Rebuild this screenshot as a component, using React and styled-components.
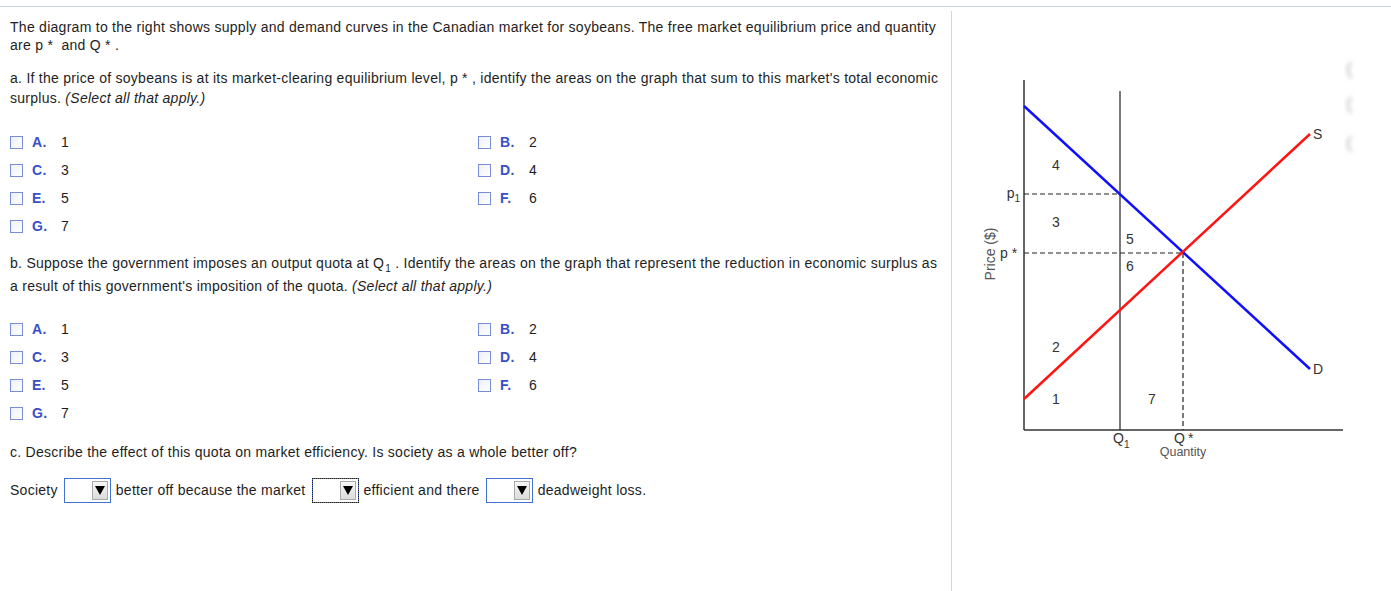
import React from 'react';
import styled, { createGlobalStyle } from 'styled-components';

const GlobalStyle = createGlobalStyle`
    html, body {
        margin: 0;
        padding: 0;
        background: #fff;
    }
    body {
        font-family: 'Liberation Sans', Arial, sans-serif;
        font-size: 14px;
        letter-spacing: 0.27px;
        color: #1e1e1e;
    }
`;

const Page = styled.div`
    margin-top: 6px;
    border-top: 1px solid #cbd2e2;
    height: 584px;
    display: flex;
    align-items: stretch;
`;

const Left = styled.div`
    box-sizing: border-box;
    width: 952px;
    margin-top: 4px;
    padding: 7px 0 0 10px;
    border-right: 1px solid #d6d6d6;
`;

const Right = styled.div`
    flex: 1;
    margin-top: 4px;
    overflow: hidden;
`;

const Para = styled.p`
    margin: ${(p) => p.$mt || 0}px 0 0;
    line-height: ${(p) => p.$lh || 18}px;
    white-space: nowrap;

    em {
        font-style: italic;
    }
`;

const Sub = styled.sub`
    font-size: 10px;
    vertical-align: -4px;
    line-height: 0;
    margin-left: 1px;
`;

const OptionGrid = styled.div`
    margin-top: ${(p) => p.$mt}px;
    display: grid;
    grid-template-columns: 468px 1fr;
    grid-auto-rows: 28px;
    align-items: center;
`;

const Option = styled.label`
    display: flex;
    align-items: center;
`;

const Box = styled.span`
    box-sizing: border-box;
    width: 13px;
    height: 13px;
    border: 1px solid #7a8cd8;
    background: linear-gradient(135deg, #eef0f8, #fff);
    margin-right: 9px;
`;

const Letter = styled.span`
    width: 29px;
    font-weight: bold;
    color: #3a4fc4;
`;

const Value = styled.span`
    color: #1e1e1e;
`;

const SelectRow = styled.div`
    margin-top: 16px;
    height: 26px;
    display: flex;
    align-items: center;
    white-space: nowrap;
`;

const FakeSelect = styled.span`
    box-sizing: border-box;
    width: 47px;
    height: 25px;
    margin: 0 5px 0 6px;
    border: 1px solid #4470cf;
    outline: ${(p) => (p.$focused ? '1px dotted #222' : 'none')};
    outline-offset: -1px;
    background: #fff;
    display: flex;
    justify-content: flex-end;
    align-items: center;
    padding-right: 2px;
`;

const Arrow = styled.span`
    box-sizing: border-box;
    width: 16px;
    height: 19px;
    border: 1px solid #a9a9a9;
    background: linear-gradient(#f6f6f6, #dcdcdc);
    display: flex;
    align-items: center;
    justify-content: center;

    &::after {
        content: '';
        border-left: 5px solid transparent;
        border-right: 5px solid transparent;
        border-top: 9px solid #000;
    }
`;

const optionsA = [
    ['A.', '1'],
    ['B.', '2'],
    ['C.', '3'],
    ['D.', '4'],
    ['E.', '5'],
    ['F.', '6'],
    ['G.', '7'],
];

function Options({ mt }) {
    return (
        <OptionGrid $mt={mt}>
            {optionsA.map(([l, v]) => (
                <Option key={l}>
                    <Box />
                    <Letter>{l}</Letter>
                    <Value>{v}</Value>
                </Option>
            ))}
        </OptionGrid>
    );
}

const GraphText = styled.text`
    font-family: 'Liberation Sans', Arial, sans-serif;
    font-size: ${(p) => p.$size || 14}px;
    letter-spacing: 0;
    fill: ${(p) => p.$color || '#333'};
`;

function Graph() {
    // coordinates are local to the right panel (page x - 952, y - 11)
    const areaLabels = [
        ['4', 104, 159],
        ['3', 104, 216],
        ['5', 178, 233],
        ['6', 178, 260],
        ['2', 104, 341],
        ['1', 104, 393],
        ['7', 200, 393],
    ];
    return (
        <svg width="439" height="580" viewBox="0 0 439 580">
            <defs>
                <filter id="soft" x="-100%" y="-100%" width="300%" height="300%">
                    <feGaussianBlur stdDeviation="2" />
                </filter>
            </defs>

            {/* faint clipped controls at the edge */}
            <g filter="url(#soft)" stroke="#d4d4d4" strokeWidth="3" fill="none">
                <path d="M 400 52 A 4 7 0 0 0 400 66" />
                <path d="M 400 87 A 4 7 0 0 0 400 101" />
                <path d="M 400 126 A 4 7 0 0 0 400 140" />
            </g>

            {/* axes */}
            <line x1="72" y1="69" x2="72" y2="419" stroke="#333" strokeWidth="1.5" />
            <line x1="72" y1="419" x2="391" y2="419" stroke="#333" strokeWidth="1.5" />

            {/* quota line */}
            <line x1="168" y1="80" x2="168" y2="419" stroke="#333" strokeWidth="1.3" />

            {/* dashed guides */}
            <g stroke="#222" strokeWidth="1.2" strokeDasharray="5 3">
                <line x1="72" y1="183" x2="168" y2="183" />
                <line x1="72" y1="242" x2="231" y2="242" />
                <line x1="231" y1="242" x2="231" y2="419" />
            </g>

            {/* demand and supply */}
            <line x1="72" y1="95" x2="358" y2="358" stroke="#1010ff" strokeWidth="2.5" />
            <line x1="72" y1="388" x2="358" y2="123" stroke="#ff1414" strokeWidth="2.5" />

            {areaLabels.map(([t, x, y]) => (
                <GraphText key={t} x={x} y={y} textAnchor="middle">
                    {t}
                </GraphText>
            ))}

            <GraphText x="361" y="128">S</GraphText>
            <GraphText x="361" y="363">D</GraphText>

            <GraphText x="68" y="187" textAnchor="end">
                p<tspan fontSize="10" dy="4">1</tspan>
            </GraphText>
            <GraphText x="48" y="247">
                p<tspan dx="4">*</tspan>
            </GraphText>

            <GraphText
                $size={14}
                $color="#555"
                x="39"
                y="243"
                textAnchor="middle"
                transform="rotate(-90 39 243)"
                dy="4"
            >
                Price ($)
            </GraphText>

            <GraphText x="161" y="432">
                Q<tspan fontSize="10" dy="5">1</tspan>
            </GraphText>
            <GraphText x="222" y="432">
                Q<tspan dx="3">*</tspan>
            </GraphText>
            <GraphText $size={12.5} $color="#555" x="231" y="445" textAnchor="middle">
                Quantity
            </GraphText>
        </svg>
    );
}

export default function App() {
    return (
        <>
            <GlobalStyle />
            <Page>
                <Left>
                    <Para>
                        The diagram to the right shows supply and demand curves in the Canadian market for soybeans. The
                        free market equilibrium price and quantity
                        <br />
                        are p *&nbsp; and Q * .
                    </Para>
                    <Para $mt={14} $lh={20}>
                        a. If the price of soybeans is at its market-clearing equilibrium level, p * , identify the
                        areas on the graph that sum to this market's total economic
                        <br />
                        surplus. <em>(Select all that apply.)</em>
                    </Para>
                    <Options mt={20} />
                    <Para $mt={12} $lh={23}>
                        b. Suppose the government imposes an output quota at Q<Sub>1</Sub> . Identify the areas on the
                        graph that represent the reduction in economic surplus as
                        <br />a result of this government's imposition of the quota. <em>(Select all that apply.)</em>
                    </Para>
                    <Options mt={17} />
                    <Para $mt={16}>
                        c. Describe the effect of this quota on market efficiency. Is society as a whole better off?
                    </Para>
                    <SelectRow>
                        Society
                        <FakeSelect>
                            <Arrow />
                        </FakeSelect>
                        better off because the market
                        <FakeSelect $focused>
                            <Arrow />
                        </FakeSelect>
                        efficient and there
                        <FakeSelect>
                            <Arrow />
                        </FakeSelect>
                        deadweight loss.
                    </SelectRow>
                </Left>
                <Right>
                    <Graph />
                </Right>
            </Page>
        </>
    );
}
